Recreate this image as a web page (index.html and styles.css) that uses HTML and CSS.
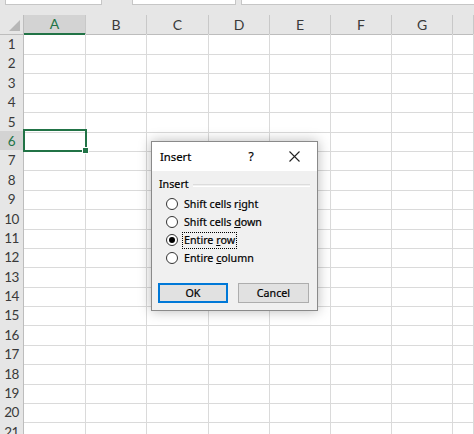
FILE: index.html
```html
<!DOCTYPE html>
<html>
<head>
<meta charset="utf-8">
<link rel="stylesheet" href="styles.css">
</head>
<body>
<div class="app">
  <div class="toolbar">
    <div class="box namebox"></div>
    <div class="box fxbox"></div>
    <div class="box formula"></div>
  </div>
  <div class="sheet">
    <div class="row head">
      <div class="corner"><span class="tri"></span></div>
      <div class="ch sel">A</div><div class="ch">B</div><div class="ch">C</div><div class="ch">D</div><div class="ch">E</div><div class="ch">F</div><div class="ch">G</div><div class="ch"></div>
    </div>
    <div class="row"><div class="rh">1</div><div class="c"></div><div class="c"></div><div class="c"></div><div class="c"></div><div class="c"></div><div class="c"></div><div class="c"></div><div class="c"></div></div>
    <div class="row"><div class="rh">2</div><div class="c"></div><div class="c"></div><div class="c"></div><div class="c"></div><div class="c"></div><div class="c"></div><div class="c"></div><div class="c"></div></div>
    <div class="row"><div class="rh">3</div><div class="c"></div><div class="c"></div><div class="c"></div><div class="c"></div><div class="c"></div><div class="c"></div><div class="c"></div><div class="c"></div></div>
    <div class="row"><div class="rh">4</div><div class="c"></div><div class="c"></div><div class="c"></div><div class="c"></div><div class="c"></div><div class="c"></div><div class="c"></div><div class="c"></div></div>
    <div class="row"><div class="rh">5</div><div class="c"></div><div class="c"></div><div class="c"></div><div class="c"></div><div class="c"></div><div class="c"></div><div class="c"></div><div class="c"></div></div>
    <div class="row"><div class="rh sel">6</div><div class="c active"></div><div class="c"></div><div class="c"></div><div class="c"></div><div class="c"></div><div class="c"></div><div class="c"></div><div class="c"></div></div>
    <div class="row"><div class="rh">7</div><div class="c"></div><div class="c"></div><div class="c"></div><div class="c"></div><div class="c"></div><div class="c"></div><div class="c"></div><div class="c"></div></div>
    <div class="row"><div class="rh">8</div><div class="c"></div><div class="c"></div><div class="c"></div><div class="c"></div><div class="c"></div><div class="c"></div><div class="c"></div><div class="c"></div></div>
    <div class="row"><div class="rh">9</div><div class="c"></div><div class="c"></div><div class="c"></div><div class="c"></div><div class="c"></div><div class="c"></div><div class="c"></div><div class="c"></div></div>
    <div class="row"><div class="rh">10</div><div class="c"></div><div class="c"></div><div class="c"></div><div class="c"></div><div class="c"></div><div class="c"></div><div class="c"></div><div class="c"></div></div>
    <div class="row"><div class="rh">11</div><div class="c"></div><div class="c"></div><div class="c"></div><div class="c"></div><div class="c"></div><div class="c"></div><div class="c"></div><div class="c"></div></div>
    <div class="row"><div class="rh">12</div><div class="c"></div><div class="c"></div><div class="c"></div><div class="c"></div><div class="c"></div><div class="c"></div><div class="c"></div><div class="c"></div></div>
    <div class="row"><div class="rh">13</div><div class="c"></div><div class="c"></div><div class="c"></div><div class="c"></div><div class="c"></div><div class="c"></div><div class="c"></div><div class="c"></div></div>
    <div class="row"><div class="rh">14</div><div class="c"></div><div class="c"></div><div class="c"></div><div class="c"></div><div class="c"></div><div class="c"></div><div class="c"></div><div class="c"></div></div>
    <div class="row"><div class="rh">15</div><div class="c"></div><div class="c"></div><div class="c"></div><div class="c"></div><div class="c"></div><div class="c"></div><div class="c"></div><div class="c"></div></div>
    <div class="row"><div class="rh">16</div><div class="c"></div><div class="c"></div><div class="c"></div><div class="c"></div><div class="c"></div><div class="c"></div><div class="c"></div><div class="c"></div></div>
    <div class="row"><div class="rh">17</div><div class="c"></div><div class="c"></div><div class="c"></div><div class="c"></div><div class="c"></div><div class="c"></div><div class="c"></div><div class="c"></div></div>
    <div class="row"><div class="rh">18</div><div class="c"></div><div class="c"></div><div class="c"></div><div class="c"></div><div class="c"></div><div class="c"></div><div class="c"></div><div class="c"></div></div>
    <div class="row"><div class="rh">19</div><div class="c"></div><div class="c"></div><div class="c"></div><div class="c"></div><div class="c"></div><div class="c"></div><div class="c"></div><div class="c"></div></div>
    <div class="row"><div class="rh">20</div><div class="c"></div><div class="c"></div><div class="c"></div><div class="c"></div><div class="c"></div><div class="c"></div><div class="c"></div><div class="c"></div></div>
    <div class="row"><div class="rh">21</div><div class="c"></div><div class="c"></div><div class="c"></div><div class="c"></div><div class="c"></div><div class="c"></div><div class="c"></div><div class="c"></div></div>
  </div>

  <div class="dialog">
    <div class="titlebar">
      <span class="title">Insert</span>
      <span class="help">?</span>
      <span class="close">
        <svg width="11" height="11" viewBox="0 0 11 11"><path d="M0.5 0.5 L10.5 10.5 M10.5 0.5 L0.5 10.5" stroke="#222" stroke-width="1.1" fill="none"/></svg>
      </span>
    </div>
    <div class="dbody">
      <div class="group">
        <span class="glabel">Insert</span>
        <span class="gline"></span>
      </div>
      <div class="options">
        <div class="opt"><span class="radio"></span><span class="lbl">Shift cells r<u>i</u>ght</span></div>
        <div class="opt"><span class="radio"></span><span class="lbl">Shift cells <u>d</u>own</span></div>
        <div class="opt"><span class="radio on"></span><span class="lbl focus">Entire <u>r</u>ow</span></div>
        <div class="opt"><span class="radio"></span><span class="lbl">Entire <u>c</u>olumn</span></div>
      </div>
      <div class="buttons">
        <div class="btn default">OK</div>
        <div class="btn">Cancel</div>
      </div>
    </div>
  </div>
</div>
</body>
</html>
```

FILE: styles.css
```css
html, body {
  margin: 0;
  padding: 0;
}
body {
  width: 474px;
  height: 434px;
  overflow: hidden;
  background: #ffffff;
}
.app {
  position: relative;
  width: 474px;
  height: 434px;
  overflow: hidden;
  font-family: Lato, "Liberation Sans", sans-serif;
}
.toolbar {
  height: 15px;
  background: #e6e6e6;
  position: relative;
  display: flex;
  align-items: flex-start;
}
.box {
  height: 5px;
  background: #ffffff;
  border: 1px solid #c6c6c6;
  border-top: none;
  box-sizing: border-box;
}
.namebox { margin-left: 5px; width: 97px; }
.fxbox { margin-left: 30px; width: 104px; }
.formula { margin-left: 5px; flex: 1; border-right: none; }

.sheet {
  display: flex;
  flex-direction: column;
}
.row {
  display: grid;
  grid-template-columns: 24px 62px 61px 62px 61px 61px 61px 61px 1fr;
  height: 19.4px;
}
.row.head {
  height: 19px;
}
.corner {
  background: #e6e6e6;
  border-right: 1px solid #bdbdbd;
  border-bottom: 1px solid #bdbdbd;
  box-sizing: border-box;
  position: relative;
}
.tri {
  position: absolute;
  right: 3px;
  bottom: 3px;
  width: 0;
  height: 0;
  border-left: 11px solid transparent;
  border-bottom: 11px solid #b7b7b7;
}
.ch {
  background: #e6e6e6;
  border-right: 1px solid #c8c8c8;
  border-bottom: 1px solid #bdbdbd;
  box-sizing: border-box;
  color: #3a3a3a;
  font-size: 14px;
  line-height: 19px;
  text-align: center;
}
.ch.sel {
  background: #d3d3d3;
  color: #217346;
  border-bottom: 2px solid #217346;
  line-height: 18px;
}
.rh {
  background: #e6e6e6;
  border-right: 1px solid #bdbdbd;
  border-bottom: 1px solid #d0d0d0;
  box-sizing: border-box;
  color: #3a3a3a;
  font-size: 13.5px;
  letter-spacing: -0.5px;
  line-height: 20px;
  text-align: center;
}
.rh.sel {
  background: #d3d3d3;
  color: #217346;
}
.c {
  border-right: 1px solid #dadada;
  border-bottom: 1px solid #dadada;
  box-sizing: border-box;
  position: relative;
}
.c.active::before {
  content: "";
  position: absolute;
  left: -1px;
  top: -2px;
  right: -2px;
  bottom: -1px;
  border: 2px solid #217346;
  z-index: 2;
}
.c.active::after {
  content: "";
  position: absolute;
  right: -4px;
  bottom: -3px;
  width: 5px;
  height: 5px;
  background: #217346;
  border: 1px solid #ffffff;
  z-index: 3;
}

/* dialog */
.dialog {
  position: absolute;
  left: 151px;
  top: 141px;
  width: 167px;
  box-sizing: border-box;
  border: 1px solid #8a8a8a;
  background: #f0f0f0;
  box-shadow: 0 0 12px rgba(0, 0, 0, 0.28);
  font-family: "Noto Sans", "Open Sans", sans-serif;
  font-size: 10.7px;
  color: #000000;
  -webkit-text-stroke: 0.2px #000000;
  z-index: 10;
}
.titlebar {
  height: 29px;
  background: #ffffff;
  display: flex;
  align-items: center;
  padding-left: 8px;
}
.title {
  flex: 1;
  font-size: 11.3px;
}
.help {
  width: 14px;
  text-align: center;
  margin-right: 31px;
  font-size: 12px;
}
.close {
  width: 11px;
  height: 11px;
  margin-right: 17px;
  display: flex;
}
.dbody {
  padding: 6px 7px 7px 6px;
}
.group {
  display: flex;
  align-items: center;
  height: 14px;
  padding-left: 1px;
}
.glabel {
  margin-right: 4px;
}
.gline {
  flex: 1;
  height: 1px;
  border-top: 1px solid #dcdcdc;
  border-bottom: 1px solid #ffffff;
  margin-top: 2px;
}
.options {
  margin-top: 4px;
  padding-left: 8px;
}
.opt {
  height: 18px;
  display: flex;
  align-items: center;
}
.radio {
  width: 12px;
  height: 12px;
  border: 1px solid #333333;
  border-radius: 50%;
  background: #ffffff;
  box-sizing: border-box;
  margin-right: 4px;
  position: relative;
  flex: none;
}
.radio.on::after {
  content: "";
  position: absolute;
  left: 2px;
  top: 2px;
  width: 6px;
  height: 6px;
  border-radius: 50%;
  background: #000000;
}
.lbl {
  white-space: nowrap;
  line-height: 15px;
  padding: 0 1px;
  border: 1px dotted transparent;
}
.lbl.focus {
  border-color: #000000;
}
.buttons {
  margin-top: 16px;
  display: flex;
  gap: 10px;
}
.btn {
  width: 71px;
  height: 20px;
  box-sizing: border-box;
  border: 1px solid #adadad;
  background: #e1e1e1;
  text-align: center;
  line-height: 18px;
}
.btn.default {
  width: 70px;
  border: 2px solid #0078d7;
  line-height: 16px;
}
```
